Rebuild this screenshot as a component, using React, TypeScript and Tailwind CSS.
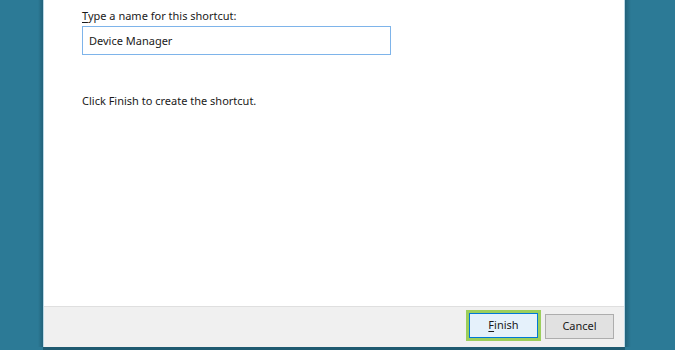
import React from 'react';

const App: React.FC = () => {
  return (
    <div
      className="relative w-[675px] h-[350px] overflow-hidden bg-[#2c7a96]"
      style={{ fontFamily: '"Noto Sans", "Open Sans", sans-serif' }}
    >
      {/* window shadow strips */}
      <div className="absolute left-[38px] top-0 w-[5px] h-[347px] bg-gradient-to-r from-[#2c7a96] to-[#22627a]" />
      <div className="absolute left-[625px] top-0 w-[6px] h-[347px] bg-gradient-to-r from-[#22627a] to-[#2c7a96]" />
      <div className="absolute left-[43px] top-[347px] w-[582px] h-[3px] bg-[#1f5a70]" />

      <div className="relative ml-[43px] w-[582px] h-[347px] flex flex-col bg-white border-x border-[#b9d8e6]">
        <div className="flex-1 pl-[38px] pt-[8px] text-[11px] text-[#1a1a1a]">
          <div className="leading-[16px]">
            <span className="underline underline-offset-2">T</span>ype a name for this shortcut:
          </div>
          <div className="mt-[2px] w-[309px] h-[29px] border border-[#7eb4ea] flex items-center px-[6px] leading-[16px]">
            Device Manager
          </div>
          <div className="mt-[38px] leading-[16px]">Click Finish to create the shortcut.</div>
        </div>
        <div className="h-[41px] bg-[#f0f0f0] border-t border-[#dfdfdf] flex items-start justify-end pr-[10px] pt-[3px] gap-[4px] text-[11px] text-[#1a1a1a]">
          <div className="border-[3px] border-[#9ccf5c]">
            <div className="w-[69px] h-[25px] bg-[#e5f1fb] border border-[#0078d7] flex items-center justify-center">
              <span>
                <span className="underline underline-offset-2">F</span>inish
              </span>
            </div>
          </div>
          <div className="mt-[4px] w-[69px] h-[25px] bg-[#e1e1e1] border border-[#adadad] flex items-center justify-center">
            Cancel
          </div>
        </div>
      </div>
    </div>
  );
};

export default App;
